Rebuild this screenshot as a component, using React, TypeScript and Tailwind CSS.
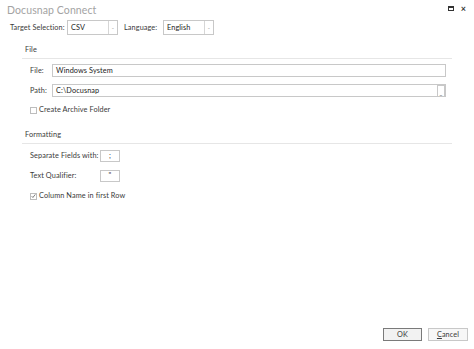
import React from "react";

function Combo({ value, width }: { value: string; width: string }) {
  return (
    <div className={`flex h-[15px] shrink-0 border border-[#c8c8c8] bg-white ${width}`}>
      <span className="flex-1 pl-[3px] leading-[13px] text-[#222]">{value}</span>
      <span className="flex w-[9px] items-center justify-center border-l border-[#d6d6d6] text-[6px] text-[#888]">-</span>
    </div>
  );
}

function Check({ checked, label }: { checked?: boolean; label: string }) {
  return (
    <div className="flex items-center gap-[2px]">
      <span className="flex h-[7px] w-[7px] items-center justify-center border border-[#bdbdbd] bg-white">
        {checked && (
          <svg width="6" height="6" viewBox="0 0 6 6">
            <path d="M0.8 3.2 L2.3 4.8 L5.2 1" stroke="#555" strokeWidth="0.9" fill="none" />
          </svg>
        )}
      </span>
      <span className="text-[#3a3a3a]">{label}</span>
    </div>
  );
}

export default function App() {
  return (
    <div className="relative flex h-[349px] w-[474px] flex-col whitespace-nowrap bg-white text-[7.3px] leading-[12px] tracking-[0.1px] text-[#3a3a3a] [font-family:Lato,sans-serif]">
      <div className="flex h-[20px] items-center justify-between pl-[7px] pr-[8px]">
        <span className="text-[10.5px] text-[#a3a3a3]">Docusnap Connect</span>
        <div className="flex items-center gap-[7px] pb-[4px]">
          <span className="h-[5px] w-[6px] border border-[#333] border-t-2" />
          <span className="text-[9px] font-bold leading-none text-[#333]">×</span>
        </div>
      </div>

      <div className="flex items-center pl-[10px]">
        <span className="w-[57px] shrink-0">Target Selection:</span>
        <Combo value="CSV" width="w-[51px]" />
        <span className="ml-[6px] w-[39px] shrink-0">Language:</span>
        <Combo value="English" width="w-[51px]" />
      </div>

      <div className="ml-[22px] mt-[9px] w-[430px]">
        <div className="border-b border-[#e6e6e6] pb-[2px] pl-[3px]">File</div>
        <div className="mt-[5px] flex flex-col gap-[7px] pl-[8px] pr-[6px]">
          <div className="flex items-center">
            <span className="w-[22px] shrink-0">File:</span>
            <div className="flex h-[13px] flex-1 items-center border border-[#c8c8c8] pl-[3px] text-[#222]">Windows System</div>
          </div>
          <div className="flex items-center">
            <span className="w-[22px] shrink-0">Path:</span>
            <div className="flex h-[13px] flex-1 items-center border border-[#c8c8c8] pl-[3px] text-[#222]">
              <span className="flex-1">C:\Docusnap</span>
              <span className="flex h-[12px] w-[8px] items-end justify-center border border-[#c8c8c8] text-[6px] leading-[6px]">_</span>
            </div>
          </div>
          <Check label="Create Archive Folder" />
        </div>

        <div className="mt-[13px] border-b border-[#e6e6e6] pb-[2px] pl-[3px]">Formatting</div>
        <div className="mt-[6px] flex flex-col gap-[8px] pl-[8px]">
          <div className="flex items-center">
            <span className="w-[70px] shrink-0">Separate Fields with:</span>
            <div className="flex h-[12px] w-[20px] items-center justify-center border border-[#c8c8c8]">;</div>
          </div>
          <div className="flex items-center">
            <span className="w-[70px] shrink-0">Text Qualifier:</span>
            <div className="flex h-[12px] w-[20px] items-center justify-center border border-[#c8c8c8]">"</div>
          </div>
          <Check checked label="Column Name in first Row" />
        </div>
      </div>

      <div className="mt-auto mb-[8px] flex justify-end gap-[6px] pr-[6px]">
        <button className="h-[13px] w-[39px] border border-[#7a7a7a] bg-[#f2f2f2] text-[7.3px] leading-none">OK</button>
        <button className="h-[13px] w-[40px] border border-[#c8c8c8] bg-[#f7f7f7] text-[7.3px] leading-none">
          <span className="underline">C</span>ancel
        </button>
      </div>
    </div>
  );
}
